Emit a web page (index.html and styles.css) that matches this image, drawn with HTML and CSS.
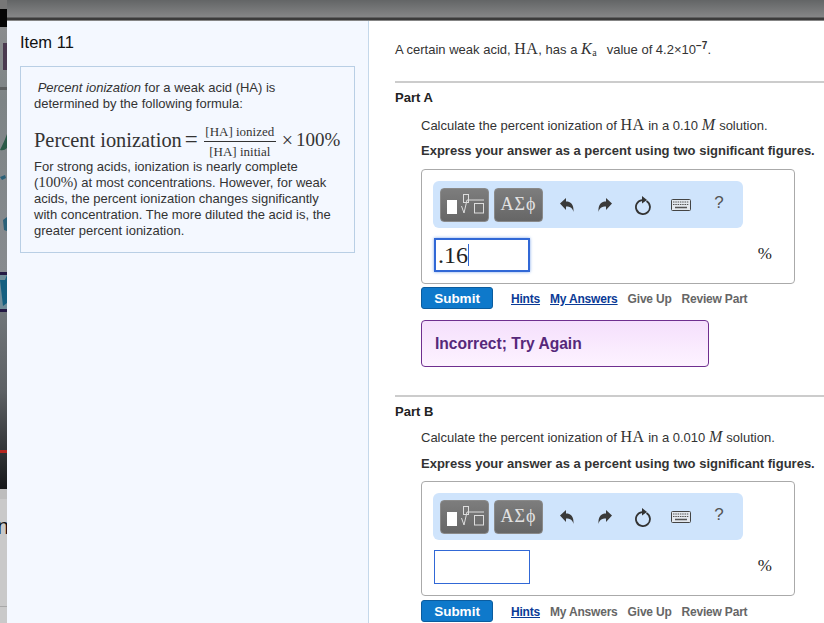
FILE: index.html
```html
<!DOCTYPE html>
<html lang="en">
<head>
<meta charset="utf-8">
<title>Item 11</title>
<link rel="stylesheet" href="styles.css">
</head>
<body>
<div class="page">
  <svg class="strip" width="7" height="623" viewBox="0 0 7 623" aria-hidden="true">
    <defs>
      <linearGradient id="fade" x1="0" y1="0" x2="0" y2="1">
        <stop offset="0" stop-color="#70767a"/><stop offset="0.45" stop-color="#5c6064"/><stop offset="1" stop-color="#16181a"/>
      </linearGradient>
      <linearGradient id="mid" x1="0" y1="0" x2="0" y2="1">
        <stop offset="0" stop-color="#8a8c8e"/><stop offset="0.3" stop-color="#7d8486"/><stop offset="1" stop-color="#878b8f"/>
      </linearGradient>
    </defs>
    <rect width="7" height="9" fill="#777"/>
    <rect y="9" width="7" height="18" fill="#050505"/>
    <rect y="27" width="7" height="245" fill="url(#mid)"/>
    <path d="M3 43h4v27H3z" fill="#4a3a50"/>
    <rect y="87" width="7" height="3" fill="#5c5f60"/>
    <path d="M0 150q5-10 7-16v14q-3 3-7 2z" fill="#2a5a48"/>
    <path d="M0 177l5-2 1 3-4 2zM3 220l4-3v14l-3-1z" fill="#2a6078"/>
    <rect y="272" width="7" height="3" fill="#241a44"/>
    <rect y="275" width="7" height="34" fill="#6f8c98"/>
    <path d="M0 280h5l2-5v28l-4 3z" fill="#145f80"/>
    <rect y="309" width="7" height="3" fill="#241a44"/>
    <rect y="312" width="7" height="177" fill="url(#fade)"/>
    <rect y="450" width="7" height="3" fill="#b5261f"/>
    <rect y="489" width="7" height="134" fill="#c9c9c9"/>
    <rect y="489" width="7" height="10" fill="#bdbdbd"/>
    <text x="-3" y="534" class="strip-letter">n</text>
    <rect y="606" width="7" height="1" fill="#a8a8a8"/>
  </svg>

  <div class="window">
    <div class="topbar"></div>
    <div class="columns">
      <aside class="side">
        <h1 class="item-title">Item 11</h1>
        <div class="note">
          <p class="note-lead">&nbsp;<em>Percent ionization</em> for a weak acid (HA) is determined by the following formula:</p>
          <div class="formula">
            <span class="formula-name">Percent ionization</span>
            <span class="formula-eq">=</span>
            <span class="fraction">
              <span class="fraction-top">[HA] ionized</span>
              <span class="fraction-bottom">[HA] initial</span>
            </span>
            <span class="formula-times">×</span>
            <span class="formula-tail">100%</span>
          </div>
          <p class="note-body">For strong acids, ionization is nearly complete (<span class="math-inline">100%</span>) at most concentrations. However, for weak acids, the percent ionization changes significantly with concentration. The more diluted the acid is, the greater percent ionization.</p>
        </div>
      </aside>

      <main class="content">
        <p class="intro">A certain weak acid, <span class="math">HA</span>, has a <span class="math"><i>K</i><sub class="math-sub">a</sub></span> value of 4.2×10<sup class="power">−7</sup>.</p>

        <section class="part part-a">
          <h2 class="part-title">Part A</h2>
          <p class="question">Calculate the percent ionization of <span class="math">HA</span> in a 0.10 <span class="math"><i>M</i></span> solution.</p>
          <p class="instruction">Express your answer as a percent using two significant figures.</p>
          <div class="answer-box">
            <div class="toolbar">
              <button class="tool-btn" type="button" aria-label="Templates">
                <svg width="47" height="32" viewBox="0 0 47 32"><rect x="6" y="11" width="10" height="14" fill="#fff"/><rect x="22.500" y="5.500" width="5" height="8" fill="none" stroke="#ddd"/><path d="M20.500 17l2.500 7 3-13h17" fill="none" stroke="#ddd"/><rect x="33.500" y="14.500" width="9" height="9.500" fill="none" stroke="#ddd"/></svg>
              </button>
              <button class="tool-btn tool-greek" type="button">ΑΣϕ</button>
              <span class="tool-icon"><svg width="16" height="16" viewBox="0 0 16 16"><path d="M1 6.500L7 1v3.500c4.500 0 8 2.500 7.500 10.500-1-4-3-5.500-7.500-5.500V13z" fill="#3a3a3a"/></svg></span>
              <span class="tool-icon"><svg width="16" height="16" viewBox="0 0 16 16"><path d="M15 6.500L9 1v3.500C4.500 4.500 1 7 1.500 15c1-4 3-5.500 7.500-5.500V13z" fill="#3a3a3a"/></svg></span>
              <span class="tool-icon"><svg width="18" height="20" viewBox="0 0 18 20"><path d="M12.500 6A7 7 0 1 1 8 5.100" fill="none" stroke="#333" stroke-width="1.800"/><path d="M8 1l5 4-5 3.500z" fill="#333"/></svg></span>
              <span class="tool-icon"><svg width="20" height="12" viewBox="0 0 20 12"><rect x=".5" y=".5" width="19" height="11" rx="1" fill="#e4e8ee" stroke="#444"/><path d="M2 3h16M2 5.500h16" stroke="#555" stroke-dasharray="1.500 .8"/><path d="M4 8.500h12" stroke="#555" stroke-width="1.500"/></svg></span>
              <span class="tool-icon tool-help">?</span>
            </div>
            <div class="answer-row">
              <div class="answer-input is-focused">.16<span class="caret"></span></div>
              <span class="unit">%</span>
            </div>
          </div>
          <div class="actions">
            <button class="submit" type="button">Submit</button>
            <a class="action on" href="#">Hints</a>
            <a class="action on" href="#">My Answers</a>
            <span class="action">Give Up</span>
            <span class="action">Review Part</span>
          </div>
          <div class="feedback">Incorrect; Try Again</div>
        </section>

        <section class="part part-b">
          <h2 class="part-title">Part B</h2>
          <p class="question">Calculate the percent ionization of <span class="math">HA</span> in a 0.010 <span class="math"><i>M</i></span> solution.</p>
          <p class="instruction">Express your answer as a percent using two significant figures.</p>
          <div class="answer-box">
            <div class="toolbar">
              <button class="tool-btn" type="button" aria-label="Templates">
                <svg width="47" height="32" viewBox="0 0 47 32"><rect x="6" y="11" width="10" height="14" fill="#fff"/><rect x="22.500" y="5.500" width="5" height="8" fill="none" stroke="#ddd"/><path d="M20.500 17l2.500 7 3-13h17" fill="none" stroke="#ddd"/><rect x="33.500" y="14.500" width="9" height="9.500" fill="none" stroke="#ddd"/></svg>
              </button>
              <button class="tool-btn tool-greek" type="button">ΑΣϕ</button>
              <span class="tool-icon"><svg width="16" height="16" viewBox="0 0 16 16"><path d="M1 6.500L7 1v3.500c4.500 0 8 2.500 7.500 10.500-1-4-3-5.500-7.500-5.500V13z" fill="#3a3a3a"/></svg></span>
              <span class="tool-icon"><svg width="16" height="16" viewBox="0 0 16 16"><path d="M15 6.500L9 1v3.500C4.500 4.500 1 7 1.500 15c1-4 3-5.500 7.500-5.500V13z" fill="#3a3a3a"/></svg></span>
              <span class="tool-icon"><svg width="18" height="20" viewBox="0 0 18 20"><path d="M12.500 6A7 7 0 1 1 8 5.100" fill="none" stroke="#333" stroke-width="1.800"/><path d="M8 1l5 4-5 3.500z" fill="#333"/></svg></span>
              <span class="tool-icon"><svg width="20" height="12" viewBox="0 0 20 12"><rect x=".5" y=".5" width="19" height="11" rx="1" fill="#e4e8ee" stroke="#444"/><path d="M2 3h16M2 5.500h16" stroke="#555" stroke-dasharray="1.500 .8"/><path d="M4 8.500h12" stroke="#555" stroke-width="1.500"/></svg></span>
              <span class="tool-icon tool-help">?</span>
            </div>
            <div class="answer-row">
              <div class="answer-input"></div>
              <span class="unit">%</span>
            </div>
          </div>
          <div class="actions">
            <button class="submit" type="button">Submit</button>
            <a class="action on" href="#">Hints</a>
            <span class="action">My Answers</span>
            <span class="action">Give Up</span>
            <span class="action">Review Part</span>
          </div>
        </section>
      </main>
    </div>
  </div>
</div>
</body>
</html>
```

FILE: styles.css
```css
* { box-sizing: border-box; }
html, body { margin: 0; height: 100%; overflow: hidden; background: #fff; }
body { font-family: "Liberation Sans", Arial, sans-serif; font-size: 13px; line-height: 16px; color: #333; }
p, h1, h2 { margin: 0; }

.page { display: flex; height: 623px; overflow: hidden; }
.strip { flex: 0 0 7px; display: block; }
.strip-letter { font-family: "Liberation Sans", sans-serif; font-size: 22px; fill: #111; }
.window { flex: 1; display: flex; flex-direction: column; min-width: 0; }
.topbar { flex: 0 0 21px; background: linear-gradient(#636566 0, #858687 17px, #3b3b3b 18px, #3b3b3b 20px, #d0d0d0 21px); }
.columns { flex: 1; display: flex; min-height: 0; }

.side { flex: 0 0 362px; background: #f4f8ff; border-right: 1px solid #c5d8ea; padding: 12px 13px 0 13px; }
.item-title { font-size: 16.5px; font-weight: normal; line-height: 18px; color: #111; }
.note { margin-top: 15px; height: 187px; border: 1px solid #b9cfe5; padding: 13px 12px 0 13px; }
.formula { display: flex; align-items: center; height: 39px; margin-top: 8px; font-family: "Liberation Serif", serif; color: #333; white-space: nowrap; }
.formula-name { font-size: 20.4px; }
.formula-eq { font-size: 23px; line-height: 20px; margin-left: 3px; }
.fraction { display: flex; flex-direction: column; align-items: center; margin-left: 6px; padding-top: 4px; font-size: 13px; line-height: 17px; width: 72px; }
.fraction-top { border-bottom: 1px solid #333; width: 100%; text-align: center; padding-bottom: 1px; }
.fraction-bottom { padding-top: 1px; }
.formula-times { font-size: 20px; margin-left: 6px; }
.formula-tail { font-size: 19px; margin-left: 3px; }
.note-body { margin-top: 0; }
.math-inline { font-family: "Liberation Serif", serif; font-size: 15px; line-height: 0; }

.content { flex: 1; padding: 20px 0 0 26px; min-width: 0; }
.intro { height: 16px; white-space: nowrap; }
.math { font-family: "Liberation Serif", serif; font-size: 16px; line-height: 16px; letter-spacing: .5px; }
.math-sub { font-size: 10px; line-height: 0; margin-right: 6px; vertical-align: -2px; font-style: normal; }
.power { font-size: 10px; line-height: 0; font-weight: bold; }
.part { border-top: 2px solid #ccc; padding-top: 7px; }
.part-a { margin-top: 24px; }
.part-b { margin-top: 28px; }
.part-title { font-size: 13px; line-height: 16px; font-weight: bold; color: #222; }
.question, .instruction, .answer-box, .actions, .feedback { margin-left: 26px; }
.question { white-space: nowrap; }
.instruction { font-weight: bold; white-space: nowrap; }
.part-a .question { margin-top: 11px; }
.part-a .instruction { margin-top: 9px; }
.part-b .question { margin-top: 9px; }
.part-b .instruction { margin-top: 10px; }

.answer-box { width: 374px; height: 115px; margin-top: 10px; border: 1px solid #aaa; border-radius: 4px; padding: 11px; }
.part-b .answer-box { margin-top: 9px; }
.toolbar { display: flex; align-items: center; width: 310px; height: 47px; padding: 0 7px; gap: 5px; background: #cfe4fc; border-radius: 6px; }
.tool-btn { width: 49px; height: 34px; padding: 0; border: 1px solid #8a8a8a; border-radius: 4px; background: linear-gradient(#7d7d7d, #666); display: flex; align-items: center; justify-content: center; }
.tool-greek { font-family: "Liberation Serif", serif; font-size: 18px; letter-spacing: 1px; color: #e2e2e2; }
.tool-icon { width: 38px; height: 24px; margin-left: 0; display: flex; align-items: center; justify-content: center; color: #444; }
.toolbar .tool-icon { margin-right: -5px; }
.tool-help { font-size: 17px; color: #555; padding-bottom: 3px; }
.answer-row { display: flex; align-items: center; justify-content: space-between; margin: 10px 11px 0 1px; }
.answer-input { width: 96px; height: 34px; border: 1px solid #3168d6; background: #fff; font-family: "Liberation Serif", serif; font-size: 24px; line-height: 32px; color: #222; padding-left: 2px; display: flex; align-items: center; }
.answer-input.is-focused { border-width: 2px; box-shadow: 0 0 3px #7ea6ea; }
.caret { width: 1px; height: 22px; background: #3168d6; }
.unit { font-family: "Liberation Serif", serif; font-size: 17px; color: #222; margin-bottom: 3px; }

.actions { display: flex; align-items: center; gap: 10px; margin-top: 3px; height: 22px; font-size: 12px; font-weight: bold; letter-spacing: -.2px; }
.part-b .actions { margin-top: 4px; }
.submit { width: 72px; height: 22px; margin-right: 8px; padding: 0; border: 1px solid #0b5c9e; border-radius: 3px; background: #0e79cb; color: #fff; font: bold 13.5px "Liberation Sans", sans-serif; }
.action { color: #666; text-decoration: none; padding-top: 2px; }
.action.on { color: #0a3a96; text-decoration: underline; }

.feedback { width: 288px; height: 47px; margin-top: 11px; padding: 0 13px; display: flex; align-items: center; border: 1px solid #6f2f8f; border-radius: 4px; background: linear-gradient(#f5dffc, #fdf3ff); color: #56287a; font-size: 15.6px; font-weight: bold; }
```
